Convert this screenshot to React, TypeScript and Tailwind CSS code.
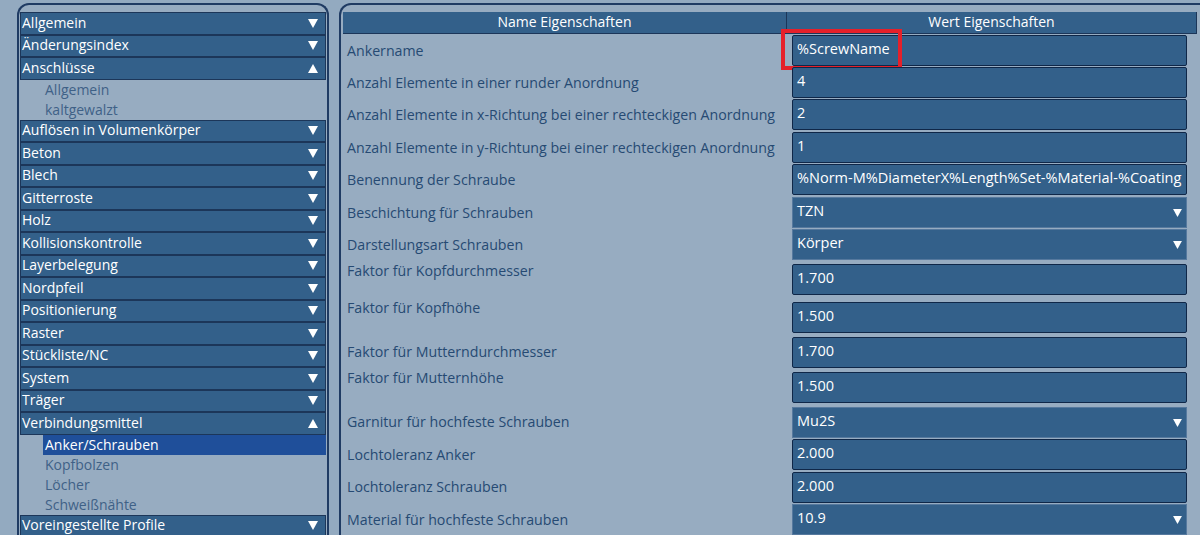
import React from "react";

type Group = {
  label: string;
  open?: boolean;
  items?: { label: string; selected?: boolean }[];
};

const groups: Group[] = [
  { label: "Allgemein" },
  { label: "Änderungsindex" },
  { label: "Anschlüsse", open: true, items: [{ label: "Allgemein" }, { label: "kaltgewalzt" }] },
  { label: "Auflösen in Volumenkörper" },
  { label: "Beton" },
  { label: "Blech" },
  { label: "Gitterroste" },
  { label: "Holz" },
  { label: "Kollisionskontrolle" },
  { label: "Layerbelegung" },
  { label: "Nordpfeil" },
  { label: "Positionierung" },
  { label: "Raster" },
  { label: "Stückliste/NC" },
  { label: "System" },
  { label: "Träger" },
  {
    label: "Verbindungsmittel",
    open: true,
    items: [
      { label: "Anker/Schrauben", selected: true },
      { label: "Kopfbolzen" },
      { label: "Löcher" },
      { label: "Schweißnähte" },
    ],
  },
  { label: "Voreingestellte Profile" },
];

type Prop = {
  name: string;
  value: string;
  select?: boolean;
  mt: string;
  lt: string;
  marked?: boolean;
};

// mt = gap above the value box, lt = label offset inside the row
const props: Prop[] = [
  { name: "Ankername", value: "%ScrewName", mt: "mt-[1px]", lt: "mt-[7px]", marked: true },
  { name: "Anzahl Elemente in einer runder Anordnung", value: "4", mt: "mt-[1px]", lt: "mt-[7px]" },
  { name: "Anzahl Elemente in x-Richtung bei einer rechteckigen Anordnung", value: "2", mt: "mt-[1px]", lt: "mt-[7px]" },
  { name: "Anzahl Elemente in y-Richtung bei einer rechteckigen Anordnung", value: "1", mt: "mt-[2px]", lt: "mt-[7px]" },
  { name: "Benennung der Schraube", value: "%Norm-M%DiameterX%Length%Set-%Material-%Coating", mt: "mt-[1px]", lt: "mt-[7px]" },
  { name: "Beschichtung für Schrauben", value: "TZN", select: true, mt: "mt-[2px]", lt: "mt-[7px]" },
  { name: "Darstellungsart Schrauben", value: "Körper", select: true, mt: "mt-[1px]", lt: "mt-[7px]" },
  { name: "Faktor für Kopfdurchmesser", value: "1.700", mt: "mt-[4px]", lt: "-mt-[2px]" },
  { name: "Faktor für Kopfhöhe", value: "1.500", mt: "mt-[7px]", lt: "-mt-[3px]" },
  { name: "Faktor für Mutterndurchmesser", value: "1.700", mt: "mt-[4px]", lt: "mt-[6px]" },
  { name: "Faktor für Mutternhöhe", value: "1.500", mt: "mt-[4px]", lt: "-mt-[3px]" },
  { name: "Garnitur für hochfeste Schrauben", value: "Mu2S", select: true, mt: "mt-[4px]", lt: "mt-[6px]" },
  { name: "Lochtoleranz Anker", value: "2.000", mt: "mt-[1px]", lt: "mt-[7px]" },
  { name: "Lochtoleranz Schrauben", value: "2.000", mt: "mt-[2px]", lt: "mt-[6px]" },
  { name: "Material für hochfeste Schrauben", value: "10.9", select: true, mt: "mt-[1px]", lt: "mt-[7px]" },
];

const Arrow = ({ up = false, className = "" }: { up?: boolean; className?: string }) => (
  <svg width="10" height="9" viewBox="0 0 10 9" className={className}>
    {up ? <polygon points="0,9 10,9 5,0" fill="#fff" /> : <polygon points="0,0 10,0 5,9" fill="#fff" />}
  </svg>
);

const Sidebar = () => (
  <div className="h-[560px] w-[312px] shrink-0 rounded-t-[12px] border-2 border-b-0 border-[#1f3b63] bg-[#97acc1] px-[1px] pt-[7px]">
    {groups.map((g) => (
      <div key={g.label}>
        <div className="flex h-[22.5px] items-center justify-between border border-[#1c3659] bg-[#33608a] pl-[1px] pr-[7px] text-[14px] leading-none whitespace-nowrap text-white">
          <span className="pb-[1px]">{g.label}</span>
          <Arrow up={g.open} />
        </div>
        {g.items?.map((it) => (
          <div
            key={it.label}
            className={`ml-[23px] flex h-[20px] items-center pl-[2px] text-[14px] leading-none whitespace-nowrap ${
              it.selected ? "bg-[#1f4f9a] text-white" : "text-[#3f6187]"
            }`}
          >
            {it.label}
          </div>
        ))}
      </div>
    ))}
  </div>
);

const PropertyGrid = () => (
  <div className="h-[560px] w-[880px] shrink-0 rounded-t-[12px] border-2 border-b-0 border-[#1f3b63] bg-[#97acc1] pl-[2px] pt-[7px]">
    <div className="flex h-[22px] w-[854px] border-b border-[#1c3659] bg-[#33608a] text-[14px] leading-none text-white">
      <div className="flex w-[444px] items-center justify-center border-r border-[#1c3659] pb-[1px]">
        Name Eigenschaften
      </div>
      <div className="flex w-[410px] items-center justify-center border-r border-[#1c3659] pb-[1px]">
        Wert Eigenschaften
      </div>
    </div>

    {props.map((p) => (
      <div key={p.name} className={`flex items-start ${p.mt}`}>
        <div className={`w-[449px] whitespace-nowrap pl-[4px] text-[14.2px] leading-[18px] text-[#264a73] ${p.lt}`}>
          {p.name}
        </div>
        <div
          className={`relative flex h-[31px] w-[395px] items-center justify-between whitespace-nowrap bg-[#33608a] pb-[2px] pl-[4px] pr-[4px] text-[14.5px] leading-none text-white ${
            p.select ? "border border-[#56799e]" : "rounded-[2px] border border-[#0f2748]"
          }`}
        >
          <span>{p.value}</span>
          {p.select && <Arrow className="mt-[2px] h-[8px] w-[9px]" />}
          {p.marked && (
            <div className="absolute left-[-12px] top-[-7px] h-[41px] w-[121px] border-4 border-[#e5202a]" />
          )}
        </div>
      </div>
    ))}
  </div>
);

export default function App() {
  return (
    <div className="flex h-[535px] w-[1200px] items-start gap-[10px] overflow-hidden bg-[#93aac0] pl-[17px] pt-[3px] font-['Segoe_UI','Open_Sans','Noto_Sans',sans-serif]">
      <Sidebar />
      <PropertyGrid />
    </div>
  );
}
